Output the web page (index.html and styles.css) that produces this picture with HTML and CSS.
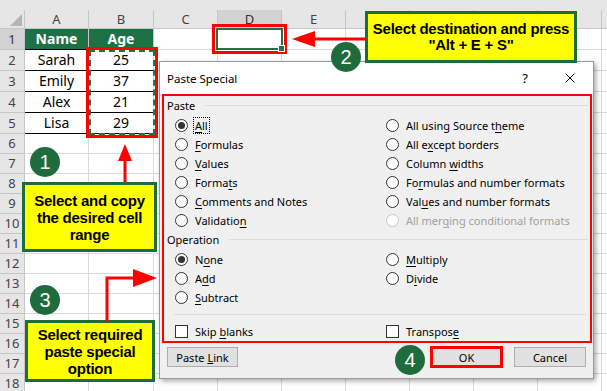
FILE: index.html
```html
<!DOCTYPE html>
<html>
<head>
	<title>Paste Special</title>
	<link rel="stylesheet" href="styles.css">
</head>
<body>
<div class="sheet">
	<div class="top-strip"></div>
	<table class="grid">
		<colgroup><col class="c-head"><col><col class="c-b"><col><col><col><col><col><col><col><col></colgroup>
		<tr class="col-heads"><th class="corner"><span class="corner-tri"></span></th><th>A</th><th>B</th><th>C</th><th class="sel">D</th><th>E</th><th>F</th><th>G</th><th>H</th><th>I</th><th></th></tr>
		<tr class="tall"><th class="sel">1</th><td class="title">Name</td><td class="title">Age</td><td></td><td></td><td></td><td></td><td></td><td></td><td></td><td></td></tr>
		<tr class="tall"><th>2</th><td class="data">Sarah</td><td class="data">25</td><td></td><td></td><td></td><td></td><td></td><td></td><td></td><td></td></tr>
		<tr class="tall"><th>3</th><td class="data">Emily</td><td class="data">37</td><td></td><td></td><td></td><td></td><td></td><td></td><td></td><td></td></tr>
		<tr class="tall"><th>4</th><td class="data">Alex</td><td class="data">21</td><td></td><td></td><td></td><td></td><td></td><td></td><td></td><td></td></tr>
		<tr class="tall"><th>5</th><td class="data">Lisa</td><td class="data">29</td><td></td><td></td><td></td><td></td><td></td><td></td><td></td><td></td></tr>
		<tr><th>6</th><td></td><td></td><td></td><td></td><td></td><td></td><td></td><td></td><td></td><td></td></tr>
		<tr><th>7</th><td></td><td></td><td></td><td></td><td></td><td></td><td></td><td></td><td></td><td></td></tr>
		<tr><th>8</th><td></td><td></td><td></td><td></td><td></td><td></td><td></td><td></td><td></td><td></td></tr>
		<tr><th>9</th><td></td><td></td><td></td><td></td><td></td><td></td><td></td><td></td><td></td><td></td></tr>
		<tr><th>10</th><td></td><td></td><td></td><td></td><td></td><td></td><td></td><td></td><td></td><td></td></tr>
		<tr><th>11</th><td></td><td></td><td></td><td></td><td></td><td></td><td></td><td></td><td></td><td></td></tr>
		<tr><th>12</th><td></td><td></td><td></td><td></td><td></td><td></td><td></td><td></td><td></td><td></td></tr>
		<tr><th>13</th><td></td><td></td><td></td><td></td><td></td><td></td><td></td><td></td><td></td><td></td></tr>
		<tr><th>14</th><td></td><td></td><td></td><td></td><td></td><td></td><td></td><td></td><td></td><td></td></tr>
		<tr><th>15</th><td></td><td></td><td></td><td></td><td></td><td></td><td></td><td></td><td></td><td></td></tr>
		<tr><th>16</th><td></td><td></td><td></td><td></td><td></td><td></td><td></td><td></td><td></td><td></td></tr>
		<tr><th>17</th><td></td><td></td><td></td><td></td><td></td><td></td><td></td><td></td><td></td><td></td></tr>
		<tr><th>18</th><td></td><td></td><td></td><td></td><td></td><td></td><td></td><td></td><td></td><td></td></tr>
	</table>

	<!-- copied range and destination cell -->
	<div class="mark copy-mark"><div class="ants"></div></div>
	<div class="mark dest-mark"><div class="active-cell"><span class="fill-handle"></span></div></div>

	<div class="dialog">
		<div class="dlg-title">
			<span class="dlg-name">Paste Special</span>
			<span class="dlg-help">?</span>
			<span class="dlg-close">
				<svg width="10" height="10" viewBox="0 0 10 10"><path d="M0.5 0.5L9.5 9.5M9.5 0.5L0.5 9.5" stroke="#000" stroke-width="1" fill="none"/></svg>
			</span>
		</div>
		<div class="dlg-body">
			<div class="group-head"><span>Paste</span></div>
			<div class="opts">
				<div class="opt"><span class="radio on"></span><span class="lbl focus"><u>A</u>ll</span></div>
				<div class="opt"><span class="radio"></span><span class="lbl">All using Source t<u>h</u>eme</span></div>
				<div class="opt"><span class="radio"></span><span class="lbl"><u>F</u>ormulas</span></div>
				<div class="opt"><span class="radio"></span><span class="lbl">All e<u>x</u>cept borders</span></div>
				<div class="opt"><span class="radio"></span><span class="lbl"><u>V</u>alues</span></div>
				<div class="opt"><span class="radio"></span><span class="lbl">Column <u>w</u>idths</span></div>
				<div class="opt"><span class="radio"></span><span class="lbl">Forma<u>t</u>s</span></div>
				<div class="opt"><span class="radio"></span><span class="lbl">Fo<u>r</u>mulas and number formats</span></div>
				<div class="opt"><span class="radio"></span><span class="lbl"><u>C</u>omments and Notes</span></div>
				<div class="opt"><span class="radio"></span><span class="lbl">Val<u>u</u>es and number formats</span></div>
				<div class="opt"><span class="radio"></span><span class="lbl">Validatio<u>n</u></span></div>
				<div class="opt off"><span class="radio"></span><span class="lbl">All mer<u>g</u>ing conditional formats</span></div>
			</div>
			<div class="group-head"><span>Operation</span></div>
			<div class="opts">
				<div class="opt"><span class="radio on"></span><span class="lbl">N<u>o</u>ne</span></div>
				<div class="opt"><span class="radio"></span><span class="lbl"><u>M</u>ultiply</span></div>
				<div class="opt"><span class="radio"></span><span class="lbl">A<u>d</u>d</span></div>
				<div class="opt"><span class="radio"></span><span class="lbl">D<u>i</u>vide</span></div>
				<div class="opt"><span class="radio"></span><span class="lbl"><u>S</u>ubtract</span></div>
			</div>
			<div class="sep"></div>
			<div class="opts checks">
				<div class="opt"><span class="check"></span><span class="lbl">Skip <u>b</u>lanks</span></div>
				<div class="opt"><span class="check"></span><span class="lbl">Transpos<u>e</u></span></div>
			</div>
		</div>
		<div class="dlg-buttons">
			<button class="btn link-btn">Paste <u>L</u>ink</button>
			<button class="btn ok-btn">OK</button>
			<button class="btn cancel-btn">Cancel</button>
		</div>
	</div>

	<div class="callout callout-copy">Select and copy<br>the desired cell<br>range</div>
	<div class="callout callout-dest">Select destination and press<br>"Alt + E + S"</div>
	<div class="callout callout-option">Select required<br>paste special<br>option</div>

	<div class="step step-1">1</div>
	<div class="step step-2">2</div>
	<div class="step step-3">3</div>
	<div class="step step-4">4</div>

	<svg class="arrows" width="607" height="391" viewBox="0 0 607 391">
		<line x1="125" y1="182" x2="125" y2="160" stroke="#f00" stroke-width="3"/>
		<polygon points="118,161 132,161 125,144" fill="#f00"/>
		<line x1="365" y1="39" x2="312" y2="39" stroke="#f00" stroke-width="3"/>
		<polygon points="315,31 315,47 292,39" fill="#f00"/>
		<polyline points="107,321 107,278 136,278" stroke="#f00" stroke-width="3" fill="none"/>
		<polygon points="133,269 133,287 157,278" fill="#f00"/>
	</svg>
</div>
</body>
</html>
```

FILE: styles.css
```css
body {
	margin: 0;
	font-family: "Noto Sans", sans-serif;
	background-color: #fff;
	overflow: hidden;
}
.sheet {
	position: relative;
	width: 607px;
	height: 391px;
	overflow: hidden;
}
.top-strip {
	height: 10px;
	background-color: #e6e6e6;
}
.grid {
	border-collapse: separate;
	border-spacing: 0;
	table-layout: fixed;
	width: 666px;
	font-size: 14px;
}
.grid col {
	width: 64px;
}
.grid col.c-head {
	width: 25px;
}
.grid col.c-b {
	width: 65px;
}
.grid th,
.grid td {
	padding: 0;
	border-right: 1px solid #d9d9d9;
	border-bottom: 1px solid #d9d9d9;
	text-align: center;
	white-space: nowrap;
	overflow: hidden;
	line-height: 1;
}
.grid th {
	background-color: #e6e6e6;
	color: #444;
	font-weight: normal;
	font-size: 13px;
	border-color: #c6c6c6;
}
.grid th.sel {
	background-color: #d2d2d2;
	color: #333;
}
.grid tr {
	height: 20px;
}
.grid tr.col-heads {
	height: 19px;
}
.grid tr.tall {
	height: 21px;
}
.corner {
	position: relative;
}
.corner-tri {
	position: absolute;
	right: 2px;
	bottom: 2px;
	width: 0;
	height: 0;
	border-left: 12px solid transparent;
	border-bottom: 12px solid #b4b4b4;
}
.grid td.title {
	background-color: #1e7145;
	color: #fff;
	font-weight: bold;
	border-bottom-color: #000;
	border-right-color: #c6c6c6;
}
.grid td.data {
	color: #000;
	border-bottom-color: #000;
}

/* selection marks */
.mark {
	position: absolute;
	box-sizing: border-box;
	border: 3px solid #f00;
}
.copy-mark {
	left: 86px;
	top: 47px;
	width: 72px;
	height: 91px;
}
.ants {
	box-sizing: border-box;
	height: 100%;
	border: 2px dashed #217346;
}
.dest-mark {
	left: 212px;
	top: 24px;
	width: 75px;
	height: 30px;
	padding: 1px;
}
.active-cell {
	position: relative;
	box-sizing: border-box;
	height: 100%;
	border: 2px solid #217346;
}
.fill-handle {
	position: absolute;
	right: -4px;
	bottom: -4px;
	width: 5px;
	height: 5px;
	background-color: #217346;
	border: 1px solid #fff;
}

/* dialog */
.dialog {
	position: absolute;
	left: 159px;
	top: 61px;
	width: 435px;
	height: 318px;
	box-sizing: border-box;
	background-color: #f0f0f0;
	border: 1px solid #9a9a9a;
	box-shadow: 2px 2px 5px rgba(0, 0, 0, 0.35);
	font-size: 11px;
	color: #000;
}
.dlg-title {
	display: flex;
	align-items: center;
	height: 32px;
	background-color: #fff;
	font-size: 11.5px;
}
.dlg-name {
	padding-left: 7px;
	flex: 1;
}
.dlg-help {
	width: 20px;
	margin-right: 12px;
	text-align: center;
	font-size: 13px;
}
.dlg-close {
	width: 46px;
	display: flex;
	justify-content: center;
}
.dlg-body {
	margin: 0 1px 0 2px;
	padding: 0 2px 0 3px;
	border: 2px solid #f00;
}
.group-head {
	display: flex;
	align-items: center;
	height: 16px;
	margin-top: 1px;
}
.group-head::after {
	content: "";
	flex: 1;
	margin-left: 10px;
	border-top: 1px solid #dcdcdc;
}
.opts {
	display: grid;
	grid-template-columns: 211px 1fr;
	margin: 3px 0 0 8px;
}
.opt {
	display: flex;
	align-items: center;
	height: 19px;
	white-space: nowrap;
}
.opt u {
	text-underline-offset: 2px;
}
.radio,
.check {
	box-sizing: border-box;
	flex: none;
	width: 13px;
	height: 13px;
	margin-right: 7px;
	background-color: #fff;
	border: 1px solid #333;
}
.radio {
	position: relative;
	border-radius: 50%;
}
.radio.on::after {
	content: "";
	position: absolute;
	left: 2px;
	top: 2px;
	width: 7px;
	height: 7px;
	border-radius: 50%;
	background-color: #333;
}
.opt.off {
	color: #a0a0a0;
}
.opt.off .radio {
	border-color: #c4c4c4;
}
.focus {
	margin-left: -2px;
	padding: 0 1px;
	border: 1px dotted #000;
}
.sep {
	margin: 7px 2px 0 7px;
	border-top: 1px solid #dcdcdc;
}
.opts.checks {
	margin-top: 7px;
}
.dlg-buttons {
	display: flex;
	align-items: center;
	height: 28px;
	padding: 0 7px;
}
.btn {
	box-sizing: border-box;
	height: 20px;
	padding: 0;
	background-color: #e1e1e1;
	border: 1px solid #adadad;
	font-family: "Noto Sans", sans-serif;
	font-size: 11px;
	color: #000;
}
.link-btn {
	width: 71px;
	margin-right: auto;
}
.ok-btn {
	width: 73px;
	height: 22px;
	border: 3px solid #f00;
	margin-right: 11px;
}
.cancel-btn {
	width: 72px;
}

/* annotations */
.callout {
	position: absolute;
	box-sizing: border-box;
	display: flex;
	flex-direction: column;
	justify-content: center;
	background-color: #ff0;
	border: 3px solid #1e6b3c;
	font-family: "Liberation Sans", Arial, sans-serif;
	font-weight: bold;
	font-size: 15px;
	letter-spacing: -0.25px;
	line-height: 17px;
	text-align: center;
	color: #000;
}
.callout-copy {
	left: 22px;
	top: 182px;
	width: 135px;
	height: 70px;
}
.callout-dest {
	left: 365px;
	top: 11px;
	width: 212px;
	height: 52px;
	line-height: 16px;
}
.callout-option {
	left: 25px;
	top: 320px;
	width: 130px;
	height: 62px;
}
.step {
	position: absolute;
	width: 30px;
	height: 30px;
	border-radius: 50%;
	background-color: #1e6b3c;
	color: #fff;
	font-family: "Liberation Sans", Arial, sans-serif;
	font-size: 20px;
	line-height: 30px;
	text-align: center;
}
.step-1 {
	left: 30px;
	top: 147px;
}
.step-2 {
	left: 331px;
	top: 42px;
}
.step-3 {
	left: 30px;
	top: 285px;
}
.step-4 {
	left: 395px;
	top: 345px;
}
.arrows {
	position: absolute;
	left: 0;
	top: 0;
	pointer-events: none;
}
```
